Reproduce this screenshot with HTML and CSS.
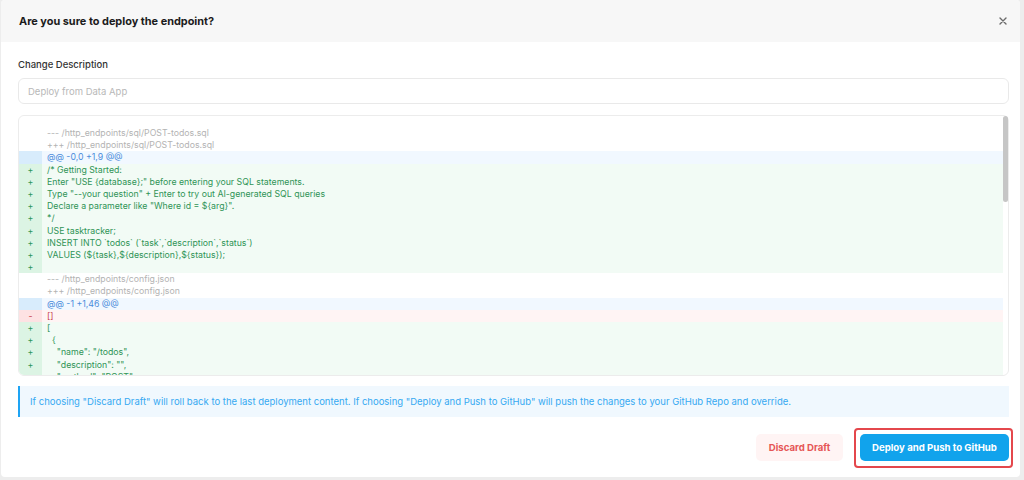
FILE: index.html
```html
<!DOCTYPE html>
<html lang="en">
<head>
  <meta charset="UTF-8">
  <title>Deploy Endpoint</title>
  <link rel="stylesheet" href="styles.css">
</head>
<body>

  <div class="modal">
    <div class="modal-header">
      <div class="modal-title">Are you sure to deploy the endpoint?</div>
      <button class="close" aria-label="Close">
        <svg width="8" height="8" viewBox="0 0 8 8"><path d="M1 1L7 7M7 1L1 7" stroke="#6b6b6b" stroke-width="1.4" stroke-linecap="round"/></svg>
      </button>
    </div>

    <div class="modal-body">
      <div class="field-label">Change Description</div>
      <input class="field-input" type="text" placeholder="Deploy from Data App">

      <div class="diff-wrap">
        <div class="diff">
          <div class="line meta"><span class="gutter"></span><span class="code">--- /http_endpoints/sql/POST-todos.sql</span></div>
          <div class="line meta"><span class="gutter"></span><span class="code">+++ /http_endpoints/sql/POST-todos.sql</span></div>
          <div class="line hunk"><span class="gutter"></span><span class="code">@@ -0,0 +1,9 @@</span></div>
          <div class="line add"><span class="gutter">+</span><span class="code">/* Getting Started:</span></div>
          <div class="line add"><span class="gutter">+</span><span class="code">Enter "USE {database};" before entering your SQL statements.</span></div>
          <div class="line add"><span class="gutter">+</span><span class="code">Type "--your question" + Enter to try out AI-generated SQL queries</span></div>
          <div class="line add"><span class="gutter">+</span><span class="code">Declare a parameter like "Where id = ${arg}".</span></div>
          <div class="line add"><span class="gutter">+</span><span class="code">*/</span></div>
          <div class="line add"><span class="gutter">+</span><span class="code">USE tasktracker;</span></div>
          <div class="line add"><span class="gutter">+</span><span class="code">INSERT INTO `todos` (`task`,`description`,`status`)</span></div>
          <div class="line add"><span class="gutter">+</span><span class="code">VALUES (${task},${description},${status});</span></div>
          <div class="line add"><span class="gutter">+</span><span class="code"></span></div>
          <div class="line meta"><span class="gutter"></span><span class="code">--- /http_endpoints/config.json</span></div>
          <div class="line meta"><span class="gutter"></span><span class="code">+++ /http_endpoints/config.json</span></div>
          <div class="line hunk"><span class="gutter"></span><span class="code">@@ -1 +1,46 @@</span></div>
          <div class="line del"><span class="gutter">-</span><span class="code">[]</span></div>
          <div class="line add"><span class="gutter">+</span><span class="code">[</span></div>
          <div class="line add"><span class="gutter">+</span><span class="code">  {</span></div>
          <div class="line add"><span class="gutter">+</span><span class="code">    "name": "/todos",</span></div>
          <div class="line add"><span class="gutter">+</span><span class="code">    "description": "",</span></div>
          <div class="line add"><span class="gutter">+</span><span class="code">    "method": "POST",</span></div>
          <div class="line add"><span class="gutter">+</span><span class="code">    "endpoint": "/todos",</span></div>
          <div class="line add"><span class="gutter">+</span><span class="code">    "data_source": {</span></div>
          <div class="line add"><span class="gutter">+</span><span class="code">      "cluster_id": 1379661944646224000</span></div>
          <div class="line add"><span class="gutter">+</span><span class="code">    },</span></div>
          <div class="line add"><span class="gutter">+</span><span class="code">    "params": [</span></div>
          <div class="line add"><span class="gutter">+</span><span class="code">      {</span></div>
          <div class="line add"><span class="gutter">+</span><span class="code">        "name": "task",</span></div>
          <div class="line add"><span class="gutter">+</span><span class="code">        "type": "string",</span></div>
          <div class="line add"><span class="gutter">+</span><span class="code">        "required": 0,</span></div>
          <div class="line add"><span class="gutter">+</span><span class="code">        "default": "",</span></div>
          <div class="line add"><span class="gutter">+</span><span class="code">        "description": ""</span></div>
          <div class="line add"><span class="gutter">+</span><span class="code">      },</span></div>
          <div class="line add"><span class="gutter">+</span><span class="code">      {</span></div>
          <div class="line add"><span class="gutter">+</span><span class="code">        "name": "description",</span></div>
          <div class="line add"><span class="gutter">+</span><span class="code">        "type": "string",</span></div>
          <div class="line add"><span class="gutter">+</span><span class="code">        "required": 0,</span></div>
          <div class="line add"><span class="gutter">+</span><span class="code">        "default": "",</span></div>
          <div class="line add"><span class="gutter">+</span><span class="code">        "description": ""</span></div>
          <div class="line add"><span class="gutter">+</span><span class="code">      },</span></div>
          <div class="line add"><span class="gutter">+</span><span class="code">      {</span></div>
          <div class="line add"><span class="gutter">+</span><span class="code">        "name": "status",</span></div>
          <div class="line add"><span class="gutter">+</span><span class="code">        "type": "string",</span></div>
          <div class="line add"><span class="gutter">+</span><span class="code">        "required": 0,</span></div>
          <div class="line add"><span class="gutter">+</span><span class="code">        "default": "",</span></div>
          <div class="line add"><span class="gutter">+</span><span class="code">        "description": ""</span></div>
          <div class="line add"><span class="gutter">+</span><span class="code">      }</span></div>
          <div class="line add"><span class="gutter">+</span><span class="code">    ],</span></div>
          <div class="line add"><span class="gutter">+</span><span class="code">    "settings": {</span></div>
          <div class="line add"><span class="gutter">+</span><span class="code">      "timeout": 30000,</span></div>
          <div class="line add"><span class="gutter">+</span><span class="code">      "row_limit": 1000,</span></div>
          <div class="line add"><span class="gutter">+</span><span class="code">      "enable_pagination": 0,</span></div>
          <div class="line add"><span class="gutter">+</span><span class="code">      "cache_enabled": 0,</span></div>
          <div class="line add"><span class="gutter">+</span><span class="code">      "cache_ttl": 0</span></div>
          <div class="line add"><span class="gutter">+</span><span class="code">    },</span></div>
          <div class="line add"><span class="gutter">+</span><span class="code">    "tag": "Default",</span></div>
          <div class="line add"><span class="gutter">+</span><span class="code">    "batch_operation": 0,</span></div>
          <div class="line add"><span class="gutter">+</span><span class="code">    "sql_file": "sql/POST-todos.sql",</span></div>
          <div class="line add"><span class="gutter">+</span><span class="code">    "type": "sql_endpoint",</span></div>
          <div class="line add"><span class="gutter">+</span><span class="code">    "return_type": "json"</span></div>
          <div class="line add"><span class="gutter">+</span><span class="code">  }</span></div>
          <div class="line add"><span class="gutter">+</span><span class="code">]</span></div>
        </div>
        <div class="scroll-thumb"></div>
      </div>

      <div class="notice">If choosing "Discard Draft" will roll back to the last deployment content. If choosing "Deploy and Push to GitHub" will push the changes to your GitHub Repo and override.</div>

      <div class="modal-footer">
        <button class="btn btn-discard">Discard Draft</button>
        <span class="highlight">
          <button class="btn btn-deploy">Deploy and Push to GitHub</button>
        </span>
      </div>
    </div>
  </div>

</body>
</html>
```

FILE: styles.css
```css
body {
  margin: 0;
  background: #ededed;
  font-family: Inter, "Noto Sans", sans-serif;
}

.modal {
  width: 1019px;
  height: 477px;
  margin-left: 1px;
  background: #fff;
  border-radius: 4px;
  overflow: hidden;
  display: flex;
  flex-direction: column;
}

.modal-header {
  height: 42px;
  flex-shrink: 0;
  background: #f7f7f7;
  padding: 0 12px 0 18px;
  display: flex;
  align-items: center;
  justify-content: space-between;
}

.modal-title {
  font-size: 10.9px;
  font-weight: 700;
  color: #1c1c1c;
}

.close {
  border: none;
  background: none;
  padding: 0;
  width: 10px;
  height: 10px;
  display: flex;
  align-items: center;
  justify-content: center;
  cursor: pointer;
}

.modal-body {
  padding: 16px 11px 0 17px;
  display: flex;
  flex-direction: column;
}

.field-label {
  font-size: 9.5px;
  font-weight: 500;
  line-height: 14px;
  color: #333;
  margin-bottom: 6px;
}

.field-input {
  height: 26px;
  box-sizing: border-box;
  border: 1px solid #e9e9e9;
  border-radius: 6px;
  padding: 0 9px;
  font-family: inherit;
  font-size: 9.5px;
  outline: none;
}

.field-input::placeholder {
  color: #b8b8b8;
}

.diff-wrap {
  position: relative;
  margin-top: 11px;
}

.diff {
  height: 261px;
  box-sizing: border-box;
  border: 1px solid #ececec;
  border-radius: 6px;
  padding: 11px 5px 8px 0;
  overflow: hidden;
  font-size: 8.75px;
}

.scroll-thumb {
  position: absolute;
  top: 1px;
  right: 1px;
  width: 5px;
  height: 86px;
  border-radius: 3px;
  background: #c6c6c6;
}

.line {
  display: flex;
  line-height: 12.2px;
  height: 12.2px;
  white-space: pre;
}

.gutter {
  width: 23px;
  flex-shrink: 0;
  text-align: center;
}

.code {
  padding-left: 5px;
  flex: 1;
}

.meta .code {
  color: #b3b3b3;
}

.hunk {
  background: #f1f8ff;
  color: #4b8cdb;
}

.hunk .gutter {
  background: #d8ecfc;
}

.add {
  background: #f2fbf5;
  color: #2f9456;
}

.add .gutter {
  background: #dcf4e4;
}

.del {
  background: #fff4f4;
  color: #c8424e;
}

.del .gutter {
  background: #fde2e3;
}

.notice {
  margin-top: 10px;
  height: 31px;
  box-sizing: border-box;
  display: flex;
  align-items: center;
  padding-left: 10px;
  background: #f0f8fe;
  border-left: 2px solid #1ea4f4;
  color: #35a9f2;
  font-size: 9.5px;
}

.modal-footer {
  margin-top: 17px;
  display: flex;
  justify-content: flex-end;
  gap: 17px;
}

.btn {
  height: 27px;
  border: none;
  border-radius: 5px;
  font-family: inherit;
  font-size: 9.6px;
  font-weight: 700;
  cursor: pointer;
}

.btn-discard {
  width: 87px;
  background: #fff4f4;
  color: #e65656;
}

.btn-deploy {
  width: 149px;
  background: #11a3ec;
  color: #fff;
}

.highlight {
  position: relative;
  display: flex;
}

.highlight::after {
  content: "";
  position: absolute;
  top: -6px;
  left: -6px;
  right: -4px;
  bottom: -7px;
  border: 2px solid #e4474c;
  border-radius: 4px;
  pointer-events: none;
}
```
